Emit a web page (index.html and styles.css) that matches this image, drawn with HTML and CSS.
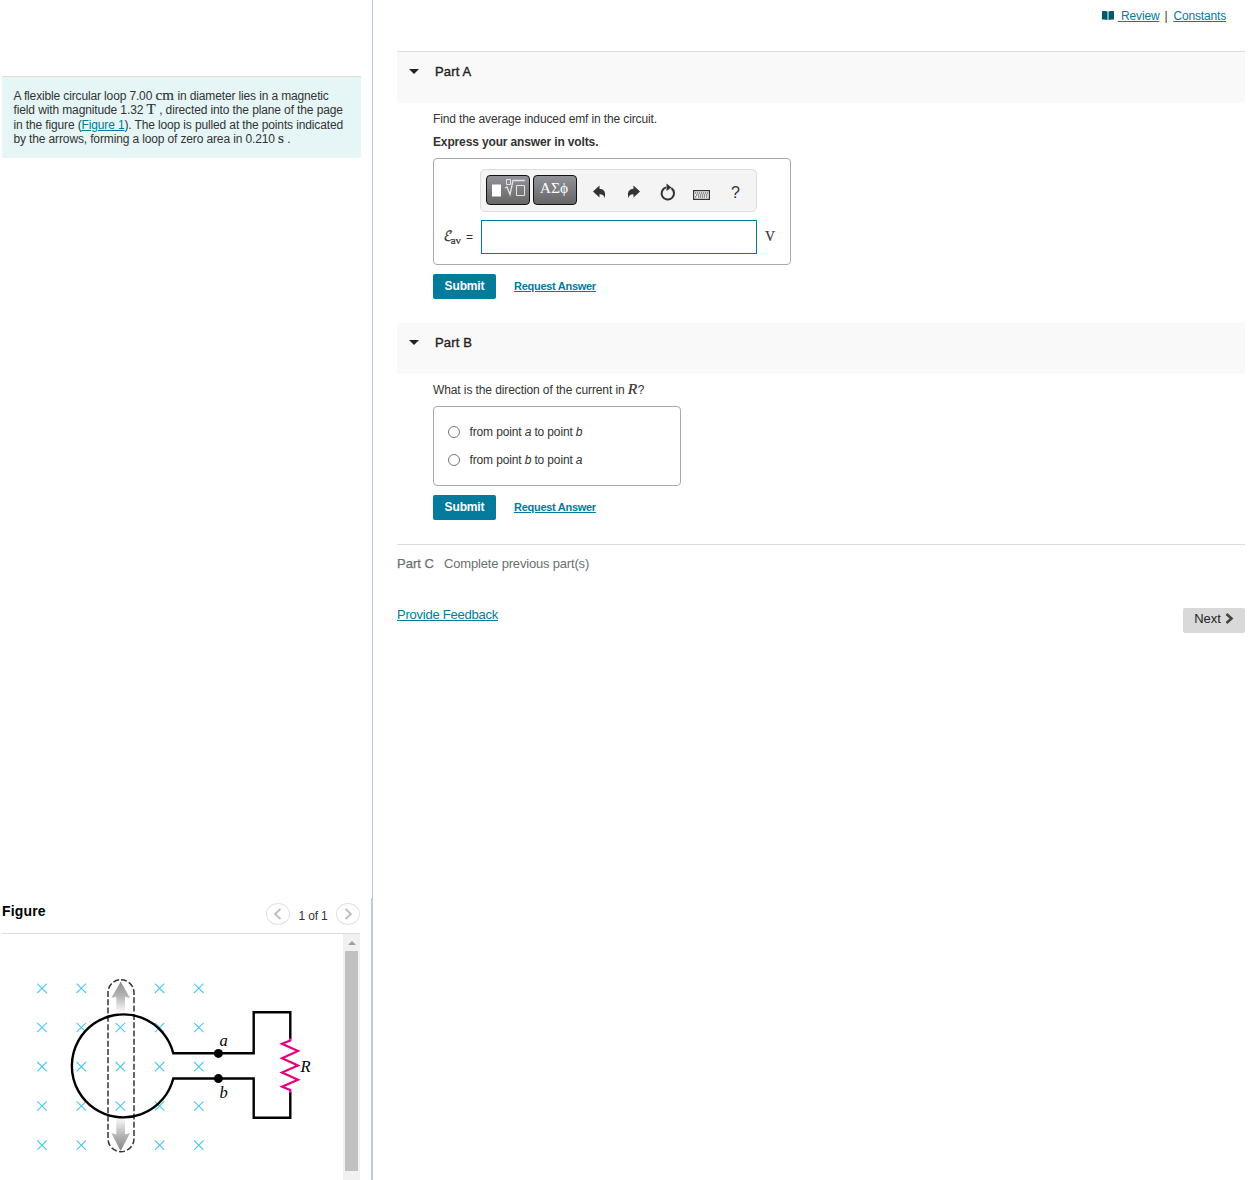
FILE: index.html
```html
<!DOCTYPE html>
<html lang="en">
<head>
<meta charset="utf-8">
<title>Induced EMF</title>
<link rel="stylesheet" href="styles.css">
</head>
<body>
<div class="page">
  <aside class="side">
    <div class="problem">
      <div class="line l1">A flexible circular loop 7.00 <span class="math">cm</span> in diameter lies in a magnetic</div>
      <div class="line l2">field with magnitude 1.32 <span class="math big">T</span> , directed into the plane of the page</div>
      <div class="line l3">in the figure (<a href="#figure">Figure 1</a>). The loop is pulled at the points indicated</div>
      <div class="line l4">by the arrows, forming a loop of zero area in 0.210 <span class="math">s</span> .</div>
    </div>
    <section class="figure" id="figure">
      <header class="figure-head">
        <h2>Figure</h2>
        <div class="pager">
          <button class="round" aria-label="Previous"><svg width="22" height="20" viewBox="0 0 22 20"><path d="M13.500 5 8 10l5.500 5"/></svg></button>
          <span class="count">1 of 1</span>
          <button class="round" aria-label="Next"><svg width="22" height="20" viewBox="0 0 22 20"><path d="M8.500 5 14 10l-5.500 5"/></svg></button>
        </div>
      </header>
      <div class="figure-body">
        <svg class="diagram" width="341" height="246" viewBox="2 934 341 246">
          <defs>
            <path id="x" d="M-4.700-4.700 4.700 4.700M4.700-4.700-4.700 4.700"/>
            <linearGradient id="up" x1="0" y1="0" x2="0" y2="1"><stop offset="0" stop-color="#8c8c8c"/><stop offset=".5" stop-color="#b8b8b8"/><stop offset="1" stop-color="#fafafa"/></linearGradient>
            <linearGradient id="down" x1="0" y1="1" x2="0" y2="0"><stop offset="0" stop-color="#858585"/><stop offset=".5" stop-color="#b8b8b8"/><stop offset="1" stop-color="#fafafa"/></linearGradient>
          </defs>
          <g class="field">
            <use href="#x" x="42" y="988.300"/><use href="#x" x="81.300" y="988.300"/><use href="#x" x="159.600" y="988.300"/><use href="#x" x="198.800" y="988.300"/>
            <use href="#x" x="42" y="1027.500"/><use href="#x" x="81.300" y="1027.500"/><use href="#x" x="120.400" y="1027.500"/><use href="#x" x="159.600" y="1027.500"/><use href="#x" x="198.800" y="1027.500"/>
            <use href="#x" x="42" y="1066.700"/><use href="#x" x="81.300" y="1066.700"/><use href="#x" x="120.400" y="1066.700"/><use href="#x" x="159.600" y="1066.700"/><use href="#x" x="198.800" y="1066.700"/>
            <use href="#x" x="42" y="1106"/><use href="#x" x="81.300" y="1106"/><use href="#x" x="120.400" y="1106"/><use href="#x" x="159.600" y="1106"/><use href="#x" x="198.800" y="1106"/>
            <use href="#x" x="42" y="1145.200"/><use href="#x" x="81.300" y="1145.200"/><use href="#x" x="159.600" y="1145.200"/><use href="#x" x="198.800" y="1145.200"/>
          </g>
          <path fill="url(#up)" d="M120.700 981.500 130 998l-5-1.200V1012h-8.700V996.800l-5 1.200z"/>
          <path fill="url(#down)" d="M120.700 1151 130 1133l-5 1.500V1118h-8.700v16.500l-5-1.500z"/>
          <rect class="dashed" x="108" y="979.700" width="26" height="172" rx="13"/>
          <path class="wire" d="M290.300 1039v-26.700h-36.600v41H173.300A51.500 51.500 0 1 0 173.300 1078.500h80.400v39.300h36.600V1092"/>
          <path class="resistor" d="M290.300 1038v2.500l-8.300 3.300 16 7.200-16 7.200 16 7.200-16 7.100 16 7.200-16 7.100 8.300 3.300v3"/>
          <circle cx="218.400" cy="1053.400" r="4.500"/><circle cx="218.400" cy="1078.600" r="4.500"/>
          <text x="219.500" y="1046">a</text><text x="219.500" y="1097.500">b</text><text x="300.500" y="1071.500">R</text>
        </svg>
        <div class="scrollbar"><span class="up"></span><span class="thumb"></span></div>
      </div>
    </section>
  </aside>
  <main class="main">
    <nav class="top">
      <svg width="12" height="9" viewBox="0 0 12 9"><path fill="#00596d" d="M0 .2Q3-.4 5.500.5V9Q3 8 0 8.600zM6.500.5Q9-.4 12 .2V8.600Q9 8 6.500 9z"/></svg>
      <a class="review" href="#">&nbsp;Review</a><span class="bar">|</span><a class="constants" href="#">Constants</a>
    </nav>
    <header class="part first"><span class="caret"></span><h3>Part A</h3></header>
    <div class="content">
      <p class="ask find">Find the average induced emf in the circuit.</p>
      <p class="ask express">Express your answer in volts.</p>
      <div class="answer">
        <div class="toolbar">
          <button class="dark" aria-label="Templates"><svg width="42" height="28" viewBox="0 0 42 28"><path fill="#fff" d="M5 8.500h9v12H5z"/><g fill="none" stroke="#e4e4e4"><path d="M19.500 3.500h4v5h-4z"/><path stroke-width="1.300" d="M18 12l2-1 3 7.500L26 4.500H38"/><path d="M29.500 9.500h8v10h-8z"/></g></svg></button>
          <button class="dark greek">ΑΣϕ</button>
          <svg class="tools" width="120" height="30" viewBox="0 0 120 30">
            <path d="M1 15.500 7.500 9.500v3.300Q15 13.500 12.700 22.500 12 18 7.500 18.200V21.500z"/>
            <path d="M48 15.500l-6.500-6v3.300Q34 13.500 36.300 22.500 37 18 41.500 18.200V21.500z"/>
            <path class="stroke" d="M79.300 12.200A6.200 6.200 0 1 1 74 11.400"/><path d="M74.500 7.500l5 4-5 3.500z"/>
            <path class="stroke thin" d="M101.600 14.600h15.800v8.800h-15.800z"/><path class="keys" d="M103 17h13M104 19h12M103 21h2m1 0h7m1 0h2"/>
          </svg>
          <span class="help">?</span>
        </div>
        <div class="entry"><label for="emf"><i>ℰ</i><sub>av</sub> <span class="eq">=</span></label><input id="emf" type="text"><span class="unit">V</span></div>
      </div>
      <div class="actions"><button class="submit">Submit</button><a href="#">Request Answer</a></div>
    </div>
    <header class="part second"><span class="caret"></span><h3>Part B</h3></header>
    <div class="content">
      <p class="ask direction">What is the direction of the current in <i class="math r">R</i>?</p>
      <div class="choices">
        <label><input type="radio" name="dir"><span>from point <i>a</i> to point <i>b</i></span></label>
        <label><input type="radio" name="dir"><span>from point <i>b</i> to point <i>a</i></span></label>
      </div>
      <div class="actions"><button class="submit">Submit</button><a href="#">Request Answer</a></div>
    </div>
    <div class="part-c"><span class="pc">Part C</span><span class="complete">Complete previous part(s)</span></div>
    <footer class="foot"><a href="#">Provide Feedback</a><button class="next"><span>Next</span><svg width="9" height="11" viewBox="0 0 9 11"><path d="M1.500 1 6.500 5.500l-5 4.500" fill="none" stroke="#444" stroke-width="2.600"/></svg></button></footer>
  </main>
</div>
</body>
</html>
```
FILE: styles.css
```css
* { box-sizing: border-box; }
body { margin: 0; background: #fff; color: #333; font: 12px/14.4px "Liberation Sans", Arial, sans-serif; overflow: hidden; }
a { color: #047a9c; text-decoration: underline; }
button { font-family: inherit; border: 0; padding: 0; }
h2, h3, p { margin: 0; }
.page { display: flex; height: 1180px; }
.math { font-family: "Liberation Serif", serif; font-size: 15px; line-height: 0; letter-spacing: .3px; -webkit-text-stroke: .2px #333; }

.side { width: 373px; flex: none; border-right: 1px solid #b9cbdc; display: flex; flex-direction: column; }
.problem { margin: 76px 11px 0 2px; height: 82px; padding: 12px 0 0 11.500px; border-top: 1px solid #dcdcdc; background: #e6f6f7; }
.line { white-space: nowrap; height: 14.400px; }
.l1 { letter-spacing: -.14px; }
.l2 { letter-spacing: -.12px; }
.l3 { letter-spacing: -.135px; }
.l4 { letter-spacing: -.135px; }
.figure { margin-top: auto; height: 282px; padding: 0 11px 0 2px; border-right: 1px solid #b9cbdc; }
.figure-head { height: 36px; display: flex; justify-content: space-between; border-bottom: 1px solid #dcdcdc; }
.figure-head h2 { color: #000; font-size: 14px; line-height: 27px; letter-spacing: .15px; }
.pager { display: flex; align-items: center; height: 32px; }
.round { width: 24px; height: 22px; border: 1px solid #e2e2e2; border-radius: 50%; background: #fff; display: grid; place-items: center; }
.round svg { fill: none; stroke: #bbb; stroke-width: 1.700; }
.count { width: 46px; text-align: center; padding-top: 4px; letter-spacing: -.15px; }
.figure-body { display: flex; height: 246px; }
.diagram { flex: none; font: italic 16.5px "Liberation Serif", serif; fill: #000; }
.field { stroke: #4dc8f2; stroke-width: 1.100; }
.dashed { fill: none; stroke: #333; stroke-width: 1.500; stroke-dasharray: 6 2.300; }
.wire { fill: none; stroke: #000; stroke-width: 2.400; }
.resistor { fill: none; stroke: #e6007e; stroke-width: 2.200; }
.scrollbar { width: 17px; flex: none; background: #f1f1f1; display: flex; flex-direction: column; align-items: center; }
.up { margin-top: 7px; border: 4px solid transparent; border-top: 0; border-bottom-color: #a0a0a0; }
.thumb { width: 13px; height: 220px; margin-top: 6px; background: #c1c1c1; }

.main { flex: 1; padding: 0 9px 0 24px; }
.top { height: 51px; padding: 9px 19px 0 0; display: flex; justify-content: flex-end; letter-spacing: -.16px; }
.top svg { margin: 2px 4px 0 0; }
.bar { margin: 0 6px 0 5px; }
.part { height: 52px; padding: 12px 0 0 12px; background: #f9f9f9; display: flex; }
.part.first { border-top: 1px solid #dcdcdc; }
.part.second { height: 51px; margin-top: 24px; }
.caret { border: 5px solid transparent; border-top-color: #222; border-bottom: 0; margin: 5px 16px 0 0; height: 5px; }
.part h3 { font-size: 13px; font-weight: 400; color: #222; line-height: 15px; letter-spacing: .15px; -webkit-text-stroke: .35px #222; }
.content { padding-left: 36px; }
.ask { white-space: nowrap; height: 23px; letter-spacing: -.125px; }
.find { padding-top: 9px; height: 32px; }
.express { font-weight: 700; letter-spacing: -.14px; }
.direction { padding-top: 9px; height: 32px; letter-spacing: -.1px; }
.r { font-size: 15.5px; letter-spacing: .6px; }
.answer { width: 358px; height: 107px; border: 1px solid #aaa; border-radius: 4px; padding-top: 10px; }
.toolbar { margin-left: 46px; width: 277px; height: 43px; border: 1px solid #ddd; border-radius: 5px; background: #f4f4f4; display: flex; padding: 5px 5px 0; }
.dark { width: 44px; flex: none; height: 30px; margin-right: 3px; border: 1px solid #111; border-radius: 4px; background: linear-gradient(#91919a, #666); overflow: hidden; }
.dark svg { display: block; }
.greek { color: #fff; font: 15.5px/23px "Liberation Serif", serif; padding: 0 2px 5px 0; }
.tools { margin: 1px 0 0 12px; fill: #333; flex: none; }
.tools .stroke { fill: none; stroke: #333; stroke-width: 2; }
.tools .thin { stroke-width: 1.200; }
.tools .keys { stroke: #333; stroke-dasharray: 1.300 .7; }
.help { font-size: 16px; line-height: 35px; margin-left: 19px; color: #333; }
.entry { display: flex; align-items: center; margin: 8px 0 0 9.500px; height: 34px; }
.entry label { width: 37.500px; font-size: 12px; white-space: nowrap; }
.entry label i { font: 14px "DejaVu Math TeX Gyre", "DejaVu Serif", serif; line-height: 0; -webkit-text-stroke: .2px #333; }
.entry sub { font: 11px "Liberation Serif", serif; line-height: 0; vertical-align: -3px; margin-left: -2.500px; -webkit-text-stroke: .2px #333; }
.eq { margin-left: 1.500px; }
.entry input { width: 276px; height: 34px; border: 1px solid #047a9c; padding: 0; background: #fff; }
.unit { font: 14px "Liberation Serif", serif; margin-left: 8px; -webkit-text-stroke: .2px #333; }
.actions { display: flex; align-items: center; margin-top: 9px; height: 25px; }
.submit { width: 63px; height: 25px; border-radius: 2px; background: #047a9c; color: #fff; font-size: 12px; font-weight: 700; padding-bottom: 2px; letter-spacing: -.15px; }
.actions a { margin-left: 18px; font-size: 11px; font-weight: 700; letter-spacing: -.28px; }
.choices { width: 248px; height: 80px; border: 1px solid #aaa; border-radius: 4px; padding: 11px 0 0 14px; letter-spacing: -.14px; }
.choices label { display: flex; align-items: center; height: 28px; }
.choices input { appearance: none; width: 12px; height: 12px; margin: 0 9.500px 0 0; border: 1px solid #767676; border-radius: 50%; background: #fff; }
.part-c { margin-top: 24px; border-top: 1px solid #dcdcdc; padding-top: 11px; height: 64px; font-size: 13px; line-height: 15px; color: #6a7070; }
.pc { display: inline-block; width: 47px; -webkit-text-stroke: .25px #6a7070; }
.complete { letter-spacing: -.18px; }
.foot { display: flex; justify-content: space-between; font-size: 13px; line-height: 14px; letter-spacing: -.23px; }
.next { width: 62px; height: 25px; border-radius: 2px; background: #d9d9d9; display: flex; align-items: center; justify-content: center; gap: 4px; color: #222; font-size: 13px; padding-bottom: 4px; }
```
